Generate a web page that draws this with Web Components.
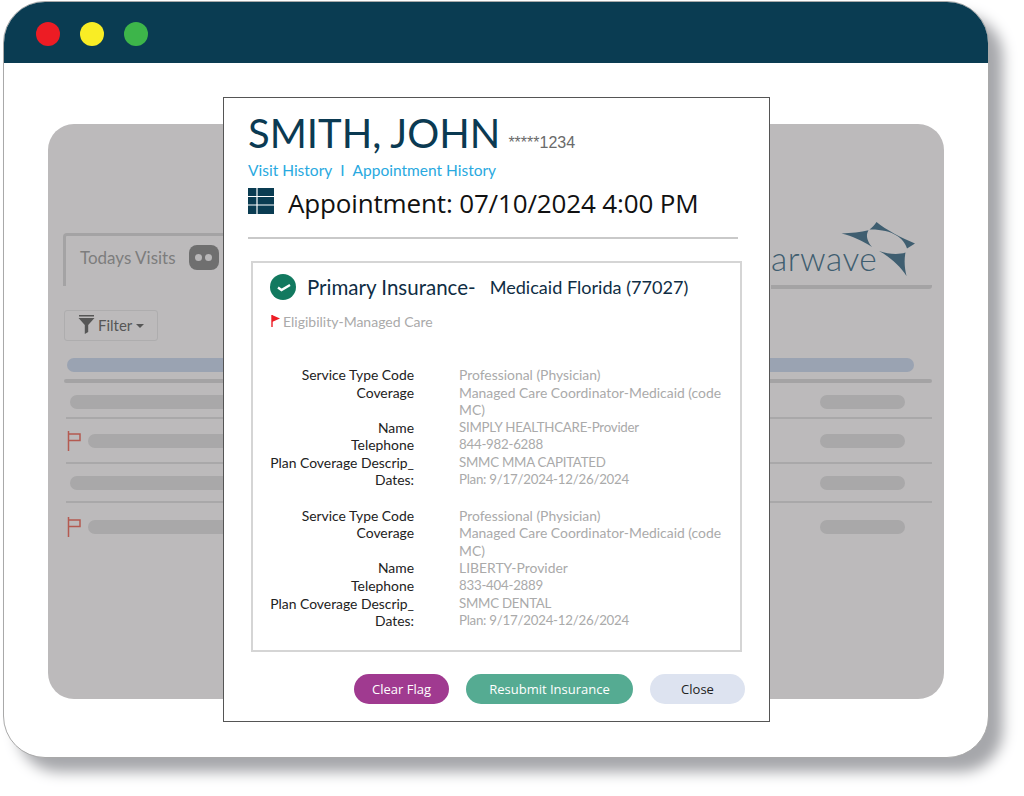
<!DOCTYPE html>
<html>
<head>
<meta charset="utf-8">
<title>Insurance</title>
<style>
  html, body { margin: 0; height: 100%; overflow: hidden; background: #fff; font-family: Lato, sans-serif; }
</style>
</head>
<body>
<app-window>
  <visits-panel></visits-panel>
  <patient-modal>
    <coverage-box></coverage-box>
  </patient-modal>
</app-window>

<script>
  // ventana principal con barra de titulo
  class AppWindow extends HTMLElement {
    connectedCallback() {
      this.attachShadow({ mode: 'open' }).innerHTML = `
      <style>
        :host { display: block; position: relative; box-sizing: border-box; width: 986px; height: 757px; margin: 1px 0 0 3px;
          background: #fff; border: 1px solid #a9a9a9; border-radius: 42px; box-shadow: 14px 14px 14px #a6a7ab; overflow: visible; }
        .bar { height: 61px; background: #0a3c52; border-radius: 41px 41px 0 0; display: flex; align-items: center; gap: 20px; padding-left: 32px; box-sizing: border-box; }
        .bar i { width: 24px; height: 24px; border-radius: 50%; margin-top: 3px; }
        .body { padding: 61px 43px 0 44px; }
      </style>
      <div class="bar">
        <i style="background:#ed1c24"></i><i style="background:#f9ed25"></i><i style="background:#3db54a"></i>
      </div>
      <div class="body"><slot></slot></div>`;
    }
  }
  customElements.define('app-window', AppWindow);

  // pastilla gris de una fila
  class RowPill extends HTMLElement {
    connectedCallback() {
      this.attachShadow({ mode: 'open' }).innerHTML = `
      <style>
        :host { display: block; height: 14px; border-radius: 7px; background: #a9a8a9; }
      </style>`;
    }
  }
  customElements.define('row-pill', RowPill);

  // panel de fondo (lista de visitas)
  class VisitsPanel extends HTMLElement {
    connectedCallback() {
      const flag = `<svg width="14" height="20" viewBox="0 0 14 20"><path d="M1.5 0V20M1.5 3H13V9.5H1.5" fill="none" stroke="#b45a50" stroke-width="1.5"/></svg>`;
      this.attachShadow({ mode: 'open' }).innerHTML = `
      <style>
        :host { display: block; box-sizing: border-box; width: 896px; height: 575px; background: #bcbabb; border-radius: 26px; padding: 109px 12px 0 15px; color: #7d7d7d; }
        .head { display: flex; justify-content: space-between; align-items: flex-end; height: 53px; position: relative; }
        .tab { box-sizing: border-box; width: 500px; height: 53px; border-left: 3px solid #a4a3a4; border-top: 3px solid #a4a3a4; border-radius: 4px 0 0 0; display: flex; align-items: center; padding: 0 0 8px 14px; gap: 13px; font-size: 17px; }
        .badge { width: 30px; height: 25px; background: #6f6f6f; border-radius: 8px; display: flex; align-items: center; justify-content: center; gap: 3px; }
        .badge b { width: 7px; height: 7px; border-radius: 50%; background: #b8b7b8; }
        .brand { display: flex; align-items: flex-start; height: 62px; margin-bottom: -3px; border-bottom: 4px solid #a4a3a4; border-radius: 0 0 3px 0; width: 161px; box-sizing: border-box; position: absolute; right: 0; bottom: 0; }
        .brand span { font-size: 33.5px; font-weight: 300; color: #3f5e70; line-height: 1; position: relative; top: 15px; letter-spacing: .5px; }
        .brand svg { position: absolute; left: 70px; top: -6px; }
        .filter { box-sizing: border-box; margin: 24px 0 0 1px; width: 94px; height: 31px; border: 1px solid #aeadae; border-radius: 3px; display: flex; align-items: center; padding: 0 0 2px 13px; gap: 3px; font-size: 15px; color: #565656; }
        .caret { width: 0; height: 0; border: 4px solid transparent; border-top-color: #565656; border-bottom: 0; margin-left: 1px; margin-top: 2px; }
        .blue { height: 14px; border-radius: 7px; background: #9aa3b2; margin: 17px 18px 0 4px; }
        .rule { height: 4px; border-radius: 2px; background: #a4a3a4; margin: 7px 0 0 1px; }
        .row { display: flex; align-items: center; justify-content: space-between; box-sizing: border-box; margin-left: 3px; padding: 0 27px 0 1px; border-bottom: 2px solid #a9a8a9; }
        .r1 { height: 36px; padding-top: 3px; }
        .r2 { height: 45px; }
        .r3 { height: 39px; }
        .r4 { height: 48px; border-bottom: 0; }
        .left { display: flex; align-items: center; gap: 7px; width: 300px; }
        .left row-pill { flex: 1; }
        .row row-pill.end { width: 85px; }
        .plain { padding-left: 4px; }
      </style>
      <div class="head">
        <div class="tab"><span>Todays Visits</span><div class="badge"><b></b><b></b></div></div>
        <div class="brand">
          <span>arwave</span>
          <svg width="76" height="56" viewBox="842 220 76 56">
            <path d="M842.5 232.5C852 232 862 231 869.5 229.2C866 235 869 241 873 246C864 240 853 235 842.5 232.5Z" fill="#3f5e70"/>
            <path d="M877.5 221C887 229 903 237 916 242.5L908 247.5C905 237 893 228 870.5 228.5C873 226.5 875.5 224 877.5 221Z" fill="#3f5e70"/>
            <path d="M880 250C889 253 899 254 906.5 251.5C905 259 905.5 267 907.5 275C901 265 891 256 880 250Z" fill="#3f5e70"/>
          </svg>
        </div>
      </div>
      <div class="filter">
        <svg width="17" height="19" viewBox="0 0 17 19"><path d="M1 0H16V1.6H1ZM0.5 3H16.5L10.2 10V17L6.8 19V10Z" fill="#565656"/></svg>
        <span>Filter</span><i class="caret"></i>
      </div>
      <div class="blue"></div>
      <div class="rule"></div>
      <div class="row r1 plain"><div class="left"><row-pill></row-pill></div><row-pill class="end"></row-pill></div>
      <div class="row r2"><div class="left">${flag}<row-pill></row-pill></div><row-pill class="end"></row-pill></div>
      <div class="row r3 plain"><div class="left"><row-pill></row-pill></div><row-pill class="end"></row-pill></div>
      <div class="row r4"><div class="left">${flag}<row-pill></row-pill></div><row-pill class="end"></row-pill></div>`;
    }
  }
  customElements.define('visits-panel', VisitsPanel);

  // boton redondeado
  class PillButton extends HTMLElement {
    connectedCallback() {
      this.attachShadow({ mode: 'open' }).innerHTML = `
      <style>
        :host { display: flex; align-items: center; justify-content: center; height: 30px; border-radius: 15px; font-family: "Open Sans", sans-serif; font-size: 13px;
          background: var(--bg); color: var(--fg, #fff); width: var(--w); }
      </style>
      <slot></slot>`;
    }
  }
  customElements.define('pill-button', PillButton);

  // modal con datos del paciente
  class PatientModal extends HTMLElement {
    connectedCallback() {
      this.attachShadow({ mode: 'open' }).innerHTML = `
      <style>
        :host { display: block; position: absolute; left: 219px; top: 95px; box-sizing: border-box; width: 547px; height: 625px; background: #fff; border: 1px solid #555; padding: 9px 31px 0 24px; }
        .name { display: flex; align-items: baseline; gap: 8px; height: 52px; }
        h1 { margin: 0; font-size: 40px; font-weight: 400; color: #0b3a52; line-height: 52px; }
        .id { font-family: "Liberation Sans", sans-serif; font-size: 16px; color: #6a6a6a; }
        .links { font-size: 15.5px; color: #29a9e0; line-height: 20px; margin-top: 1px; }
        .links span { margin: 0 4px; }
        .appt { display: flex; align-items: flex-start; gap: 14px; height: 52px; margin-top: 5px; }
        .appt svg { margin-top: 3px; }
        .appt div { font-family: "Open Sans", sans-serif; font-size: 26px; color: #111; line-height: 36px; letter-spacing: -.15px; }
        hr { margin: 0; border: 0; height: 2px; background: #c9c9c9; }
        .buttons { display: flex; justify-content: flex-end; gap: 17px; margin: 22px -7px 0 0; }
      </style>
      <div class="name"><h1>SMITH, JOHN</h1><span class="id">*****1234</span></div>
      <div class="links">Visit History<span> I </span>Appointment History</div>
      <div class="appt">
        <svg width="26" height="26" viewBox="0 0 26 26"><path d="M0 0H26V26H0Z" fill="#0a3c52"/><path d="M9 0V26M0 8.5H26M0 17H26" stroke="#fff" stroke-width="1.2"/></svg>
        <div>Appointment: 07/10/2024 4:00 PM</div>
      </div>
      <hr>
      <slot></slot>
      <div class="buttons">
        <pill-button style="--bg:#a03a90;--w:95px">Clear Flag</pill-button>
        <pill-button style="--bg:#55ab92;--w:167px">Resubmit Insurance</pill-button>
        <pill-button style="--bg:#dde3f0;--fg:#222;--w:95px">Close</pill-button>
      </div>`;
    }
  }
  customElements.define('patient-modal', PatientModal);

  class CoverageBox extends HTMLElement {
    connectedCallback() {
      const plans = [
        [['Service Type Code', 'Professional (Physician)'], ['Coverage', 'Managed Care Coordinator-Medicaid (code MC)'], ['Name', 'SIMPLY HEALTHCARE-Provider', 't'], ['Telephone', '844-982-6288', 't'], ['Plan Coverage Descrip_', 'SMMC MMA CAPITATED', 't'], ['Dates:', 'Plan: 9/17/2024-12/26/2024', 't']],
        [['Service Type Code', 'Professional (Physician)'], ['Coverage', 'Managed Care Coordinator-Medicaid (code MC)'], ['Name', 'LIBERTY-Provider'], ['Telephone', '833-404-2889', 't'], ['Plan Coverage Descrip_', 'SMMC DENTAL', 't'], ['Dates:', 'Plan: 9/17/2024-12/26/2024', 't']]
      ];
      const grids = plans.map(p => `<div class="grid">${p.map(r => `<span class="k">${r[0]}</span><span class="v ${r[2] || ''}">${r[1]}</span>`).join('')}</div>`).join('');
      this.attachShadow({ mode: 'open' }).innerHTML = `
      <style>
        :host { display: block; box-sizing: border-box; width: 491px; height: 391px; margin: 22px 0 0 3px; border: 2px solid #d5d5d5; padding: 11px 0 0 17px; }
        .title { display: flex; align-items: center; height: 26px; color: #0f2d44; }
        .title svg { margin-right: 11px; }
        .title b { font-weight: 400; font-size: 20.5px; margin-right: 14px; }
        .title span { font-size: 18.1px; }
        .flag { display: flex; align-items: center; gap: 2px; margin: 11px 0 0 1px; height: 20px; font-size: 14px; color: #aaa; }
        .grid { display: grid; grid-template-columns: 144px 265px; column-gap: 45px; font-size: 13.9px; line-height: 17.55px; margin-top: 35px; }
        .grid + .grid { margin-top: 18px; }
        .k { text-align: right; color: #222; white-space: nowrap; }
        .v { color: #aaa; }
        .t { font-size: 13.3px; letter-spacing: -.25px; }
      </style>
      <div class="title">
        <svg width="26" height="26" viewBox="0 0 26 26"><circle cx="13" cy="13" r="13" fill="#12795f"/><path d="M8 13.5L11.5 16L20 11" fill="none" stroke="#fff" stroke-width="2.4"/></svg>
        <b>Primary Insurance-</b><span>Medicaid Florida (77027)</span>
      </div>
      <div class="flag">
        <svg width="10" height="12" viewBox="0 0 10 12"><path d="M1 0V12" stroke="#ed1c24" stroke-width="1.4"/><path d="M1 0L9 3.5L1 7Z" fill="#ed1c24"/></svg>
        <span>Eligibility-Managed Care</span>
      </div>
      ${grids}`;
    }
  }
  customElements.define('coverage-box', CoverageBox);
</script>
</body>
</html>
